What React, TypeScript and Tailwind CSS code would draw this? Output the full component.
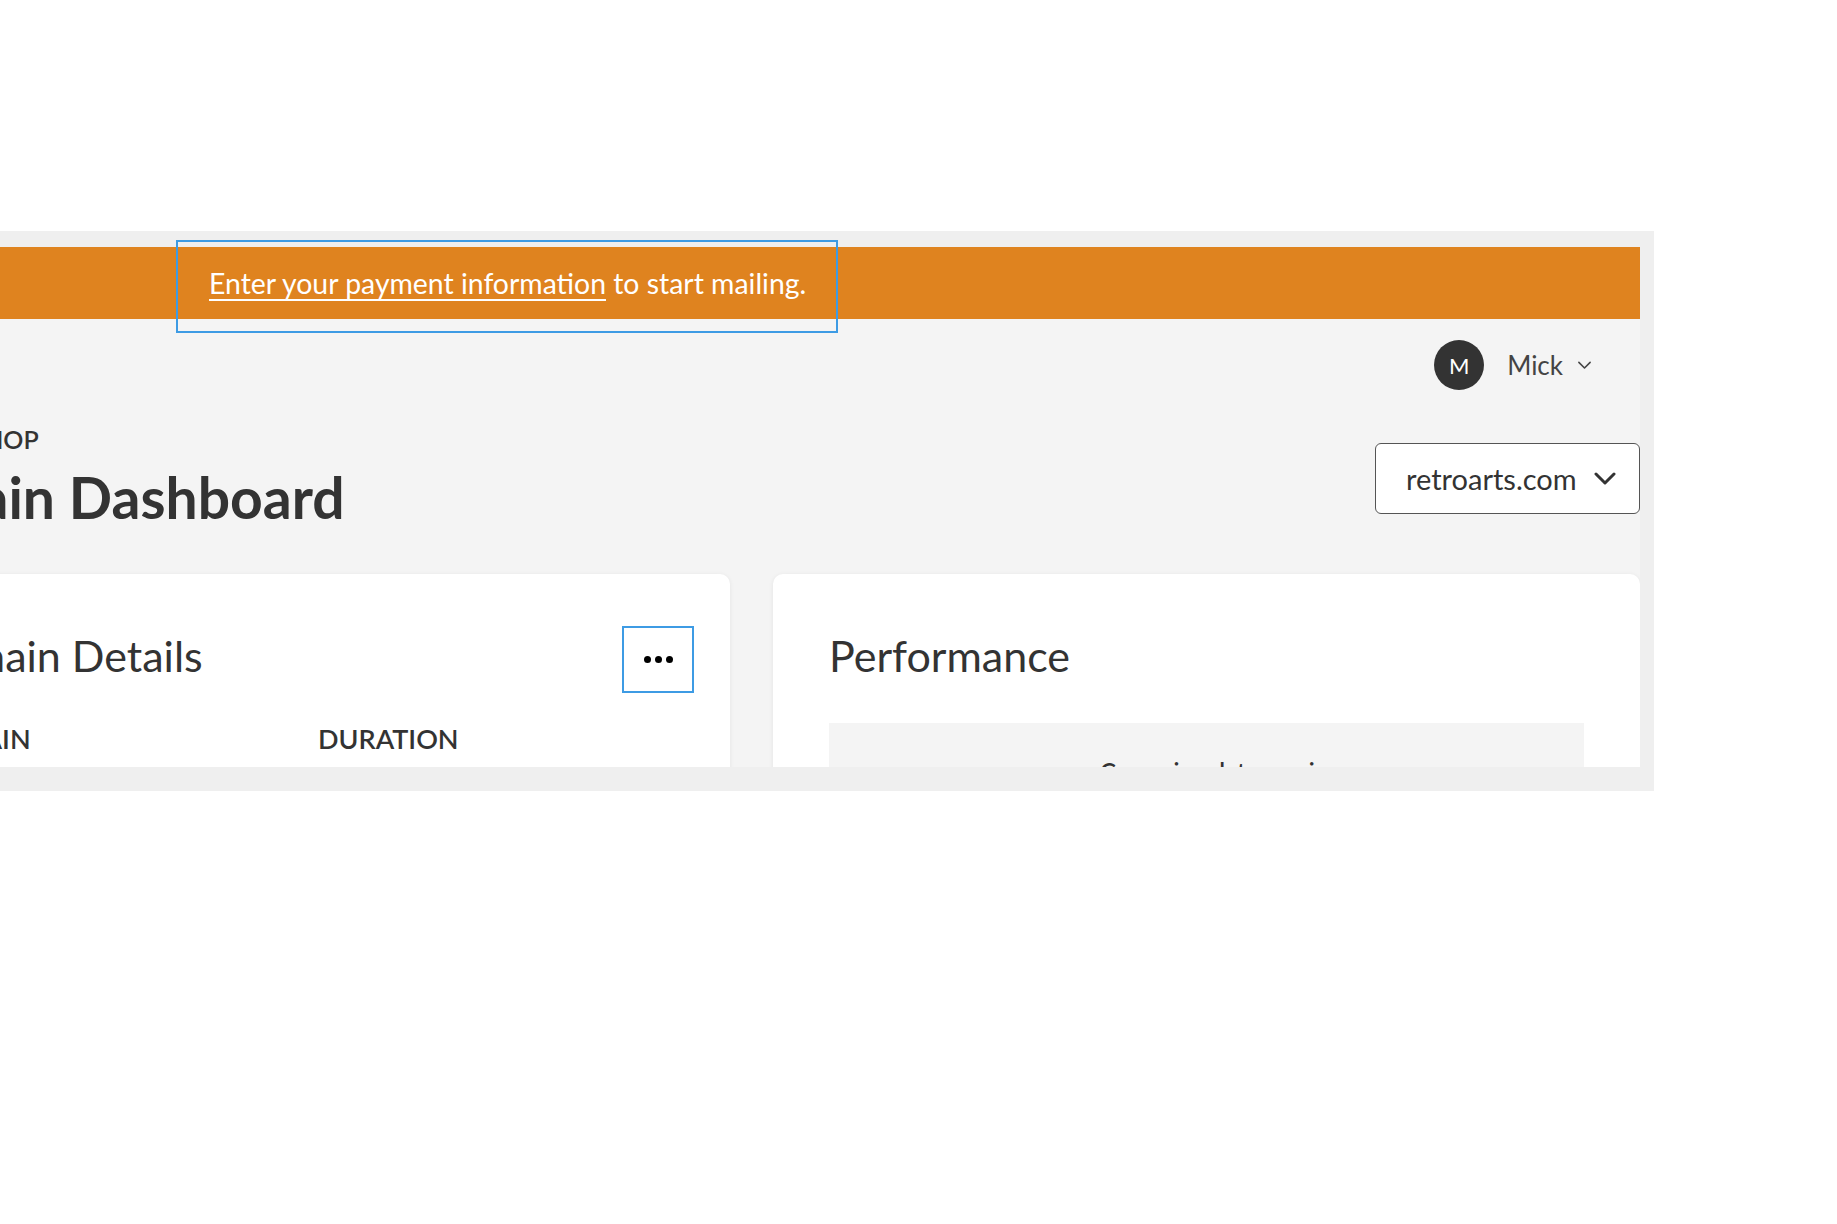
import React from "react";

function Chevron({ className, stroke = 2 }: { className?: string; stroke?: number }) {
  return (
    <svg viewBox="0 0 24 14" className={className} fill="none" stroke="currentColor" strokeWidth={stroke} strokeLinecap="round" strokeLinejoin="round">
      <path d="M3 2l9 9 9-9" />
    </svg>
  );
}

// Account dashboard, scrolled so the left edge of the page is out of view.
export default function App() {
  return (
    <div className="min-h-screen w-full overflow-hidden bg-white pt-[231px] font-['Lato',sans-serif] text-[#333]">
      <div className="w-[1654px] bg-[#efefef] pb-[24px] pr-[14px] pt-[16px]">
        <div className="bg-[#f4f4f4]">
          {/* payment banner */}
          <div className="relative flex h-[72px] items-center bg-[#df831f] pl-[209px] text-[28.4px] text-white">
            <p className="leading-none">
              <a className="underline decoration-[1.5px] underline-offset-[5px]">Enter your payment information</a> to start mailing.
            </p>
            <div className="pointer-events-none absolute left-[176px] top-[-7px] h-[93px] w-[662px] border-2 border-[#3d9be4]" />
          </div>

          {/* user menu */}
          <div className="flex h-[92px] items-center justify-end pr-[48px]">
            <div className="flex h-[50px] w-[50px] items-center justify-center rounded-full bg-[#333] text-[22px] text-white">M</div>
            <span className="ml-[23px] text-[26px] text-[#444]">Mick</span>
            <Chevron className="ml-[14px] h-[9px] w-[15px] text-[#444]" stroke={2.5} />
          </div>

          <div className="h-[356px] overflow-hidden">
            <div className="flex items-start justify-between">
              <div className="-ml-[144px] pt-[13px]">
                <p className="-ml-[39px] text-[25px] font-semibold uppercase leading-[30px] text-[#333]">Retro Arts Shop</p>
                <h1 className="mt-[9px] text-[57px] font-bold leading-[68px] text-[#333]">Domain Dashboard</h1>
              </div>
              <button className="mt-[32px] flex h-[71px] w-[265px] items-center justify-between rounded-[6px] border-[1.5px] border-[#555] bg-white pl-[30px] pr-[22px] text-[29px] text-[#333]">
                <span>retroarts.com</span>
                <Chevron className="h-[14px] w-[24px]" stroke={3} />
              </button>
            </div>

            <div className="-ml-[123px] mt-[43px] flex gap-[43px]">
              <section className="h-[400px] w-[853px] rounded-[10px] bg-white pl-[56px] pr-[36px] pt-[56px] shadow-[0_1px_5px_rgba(0,0,0,0.07)]">
                <div className="flex items-start justify-between">
                  <h2 className="-ml-[20px] text-[43px] leading-[51px] text-[#333]">Domain Details</h2>
                  <button className="-mt-[4px] flex h-[67px] w-[72px] items-center justify-center gap-[4px] border-2 border-[#3d9be4] bg-white">
                    <span className="h-[7px] w-[7px] rounded-full bg-black" />
                    <span className="h-[7px] w-[7px] rounded-full bg-black" />
                    <span className="h-[7px] w-[7px] rounded-full bg-black" />
                  </button>
                </div>
                <div className="-ml-[17px] mt-[30px] grid grid-cols-[402px_1fr] text-[27px] font-semibold uppercase leading-[32px] text-[#333]">
                  <span>Domain</span>
                  <span>Duration</span>
                </div>
              </section>

              <section className="h-[400px] flex-1 rounded-[10px] bg-white px-[56px] pt-[56px] shadow-[0_1px_5px_rgba(0,0,0,0.07)]">
                <h2 className="text-[43px] leading-[51px] text-[#333]">Performance</h2>
                <div className="mt-[42px] h-[300px] bg-[#f4f4f4] pl-[271px] pt-[34px]">
                  <p className="text-[24px] font-semibold leading-[29px] text-[#333]">Campaign data coming soon</p>
                </div>
              </section>
            </div>
          </div>
        </div>
      </div>
    </div>
  );
}
